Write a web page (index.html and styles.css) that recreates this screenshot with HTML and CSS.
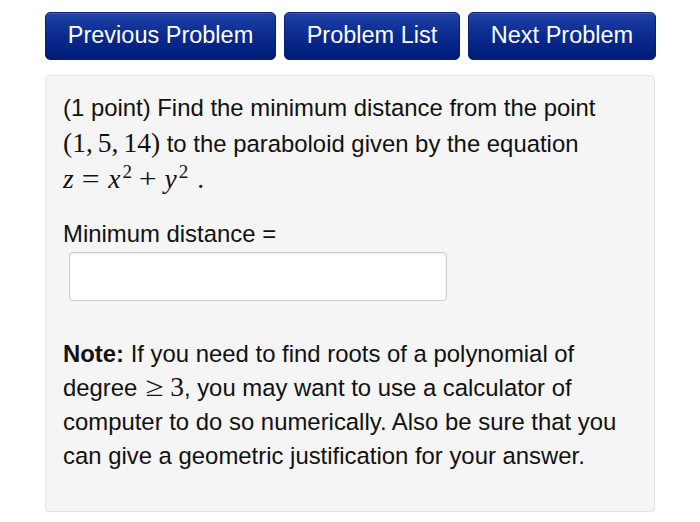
FILE: index.html
```html
<!DOCTYPE html>
<html>
<head>
<meta charset="utf-8">
<link rel="stylesheet" href="styles.css">
</head>
<body>
<div class="page">
  <div class="nav">
    <button class="btn btn-prev">Previous Problem</button>
    <button class="btn btn-list">Problem List</button>
    <button class="btn btn-next">Next Problem</button>
  </div>
  <div class="card">
    <p class="problem">(1 point) Find the minimum distance from the point <span class="math">(1,<span class="sp"></span>5,<span class="sp"></span>14)</span> to the paraboloid given by the equation <span class="math"><i>z</i><span class="op">=</span><i>x</i><sup>2</sup><span class="op op-plus">+</span><i>y</i><sup>2</sup><span class="dot">.</span></span></p>
    <p class="label">Minimum distance =</p>
    <input class="answer" type="text">
    <p class="note"><b>Note:</b> If you need to find roots of a polynomial of degree <span class="math"><span class="ge">&ge;</span>3</span>, you may want to use a calculator of computer to do so numerically. Also be sure that you can give a geometric justification for your answer.</p>
  </div>
</div>
</body>
</html>
```

FILE: styles.css
```css
html, body {
  margin: 0;
  padding: 0;
  background: #ffffff;
}
.page {
  padding: 12px 0 0 45px;
  font-family: "Liberation Sans", Arial, sans-serif;
  color: #111111;
}
.nav {
  display: flex;
  gap: 8px;
}
.btn {
  height: 48px;
  border: 1px solid #0b1f70;
  border-radius: 5px;
  background: linear-gradient(to bottom, #1e42a8 0%, #0a2a8e 50%, #001c78 100%);
  color: #ffffff;
  font-family: "Liberation Sans", Arial, sans-serif;
  font-size: 23.5px;
  padding: 0 0 2px 0;
  box-shadow: inset 0 1px 0 rgba(255,255,255,0.15);
}
.btn-prev { width: 231px; }
.btn-list { width: 176px; }
.btn-next { width: 188px; }
.card {
  margin-top: 15px;
  width: 574px;
  padding: 14px 17px 38px 17px;
  background: #f5f5f5;
  border: 1px solid #e3e3e3;
  border-radius: 4px;
  font-size: 23.9px;
}
.card p {
  margin: 0;
}
.problem {
  line-height: 36px;
}
.math {
  font-family: "Liberation Serif", "Times New Roman", serif;
  font-size: 27.5px;
  white-space: nowrap;
  line-height: 0;
}
.math i {
  padding-right: 1px;
}
.math sup {
  font-size: 19px;
  line-height: 0;
  margin-left: 1px;
}
.sp {
  display: inline-block;
  width: 5px;
}
.op {
  display: inline-block;
  margin: 0 10px 0 8px;
  transform: scaleX(1.15);
}
.op-plus {
  margin: 0 9px 0 8px;
}
.dot {
  margin-left: 9px;
}
.ge {
  display: inline-block;
  margin: 0 8px 0 3px;
  transform: scaleX(1.2);
}
.label {
  margin-top: 18px !important;
  line-height: 36px;
}
.answer {
  display: block;
  box-sizing: border-box;
  margin-left: 6px;
  width: 378px;
  height: 49px;
  border: 1px solid #cccccc;
  border-radius: 4px;
  background: #ffffff;
  box-shadow: inset 0 1px 2px rgba(0,0,0,0.08);
}
.note {
  margin-top: 36px !important;
  line-height: 34px;
}
```
